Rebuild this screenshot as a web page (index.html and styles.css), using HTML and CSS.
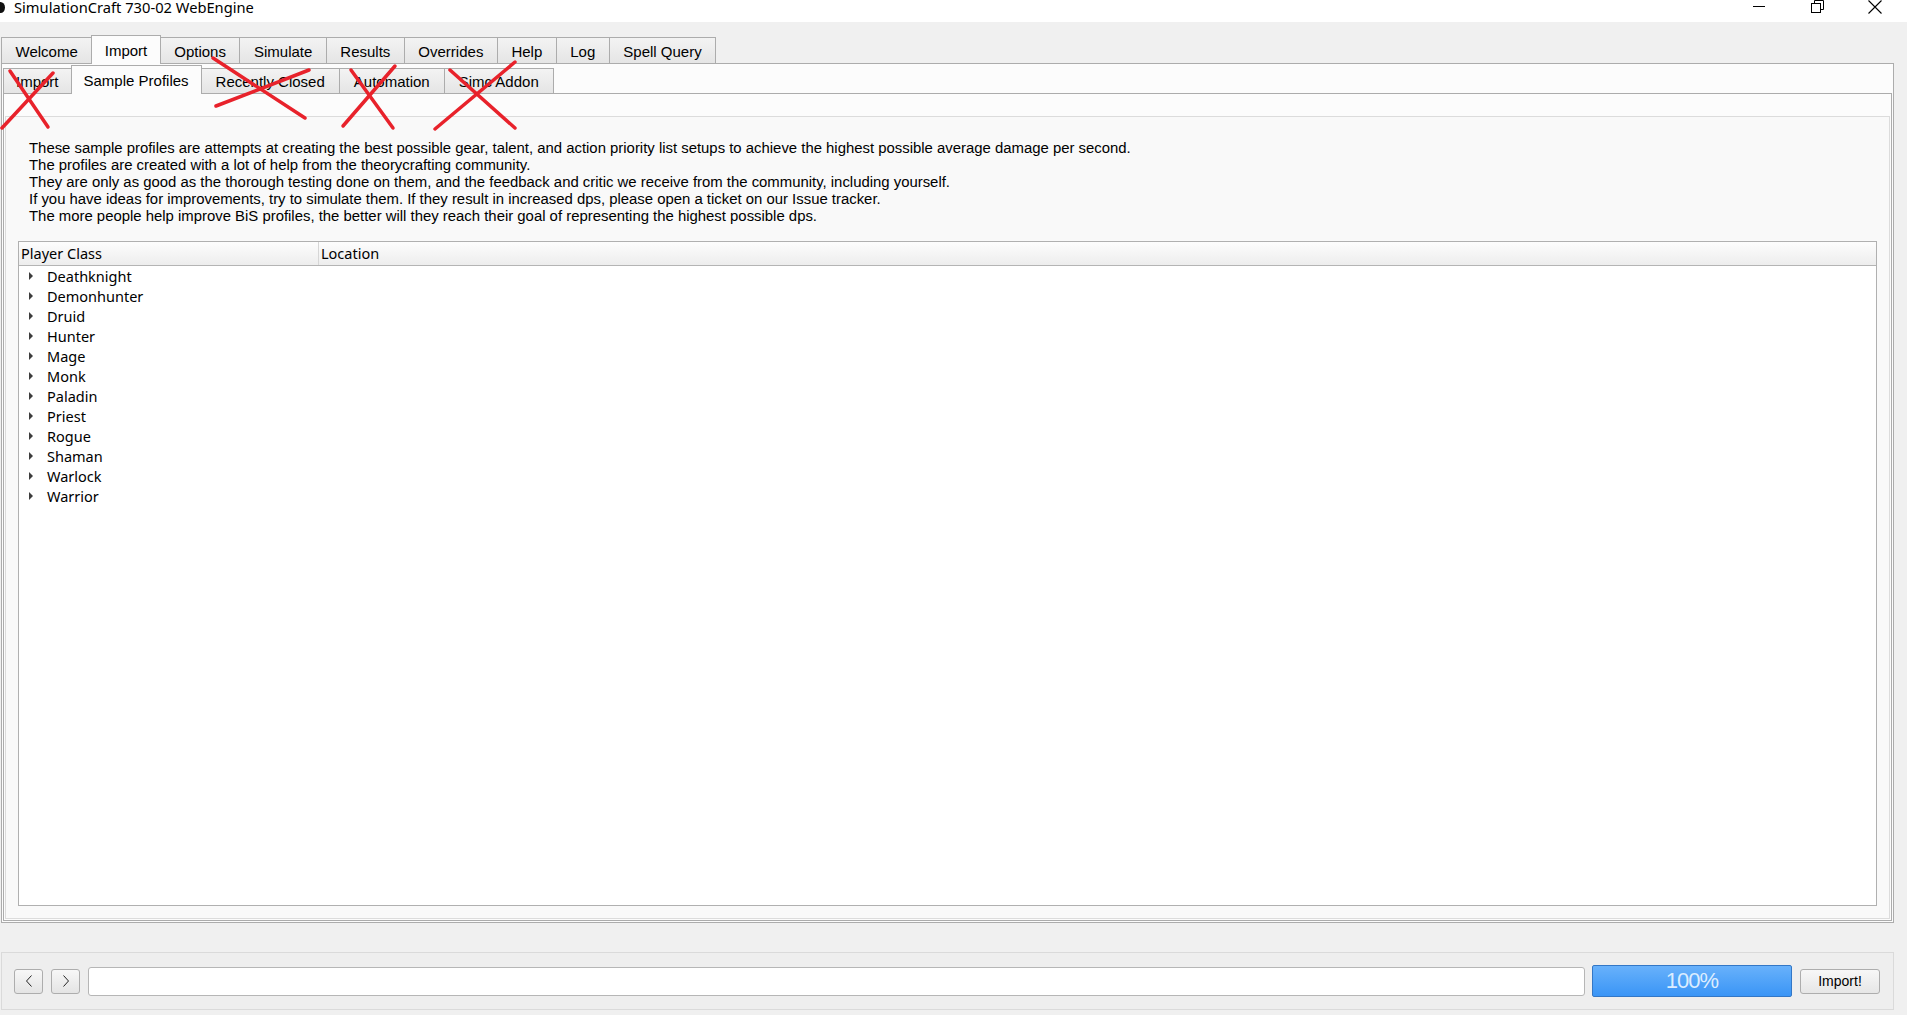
FILE: index.html
```html
<!DOCTYPE html>
<html>
<head>
<meta charset="utf-8">
<title>SimulationCraft 730-02 WebEngine</title>
<link rel="stylesheet" href="styles.css">
</head>
<body>
<div class="titlebar">
  <span class="appicon"></span>
  <span class="title">SimulationCraft 730-02 WebEngine</span>
  <div class="winctl">
    <div class="winbtn"><svg width="12" height="12" viewBox="0 0 12 12"><line x1="0" y1="6.5" x2="12" y2="6.5" stroke="#000" stroke-width="1"/></svg></div>
    <div class="winbtn"><svg width="13" height="13" viewBox="0 0 13 13"><rect x="0.5" y="3.5" width="9" height="9" fill="none" stroke="#000"/><path d="M3.5 3.5 V0.5 H12.5 V9.5 H9.5" fill="none" stroke="#000"/></svg></div>
    <div class="winbtn"><svg width="14" height="14" viewBox="0 0 14 14"><path d="M0.5 0.5 L13.5 13.5 M13.5 0.5 L0.5 13.5" stroke="#000" stroke-width="1.1"/></svg></div>
  </div>
</div>

<div class="window">
  <div class="tabbar">
    <div class="tab">Welcome</div>
    <div class="tab active">Import</div>
    <div class="tab">Options</div>
    <div class="tab">Simulate</div>
    <div class="tab">Results</div>
    <div class="tab">Overrides</div>
    <div class="tab">Help</div>
    <div class="tab">Log</div>
    <div class="tab">Spell Query</div>
  </div>
  <div class="panel-outer">
    <div class="subtabbar">
      <div class="tab sub">Import</div>
      <div class="tab sub active">Sample Profiles</div>
      <div class="tab sub">Recently Closed</div>
      <div class="tab sub">Automation</div>
      <div class="tab sub">Simc Addon</div>
    </div>
    <div class="panel-sub">
      <div class="strip"></div>
      <div class="panel-inner">
        <div class="desc">
          <div>These sample profiles are attempts at creating the best possible gear, talent, and action priority list setups to achieve the highest possible average damage per second.</div>
          <div>The profiles are created with a lot of help from the theorycrafting community.</div>
          <div>They are only as good as the thorough testing done on them, and the feedback and critic we receive from the community, including yourself.</div>
          <div>If you have ideas for improvements, try to simulate them. If they result in increased dps, please open a ticket on our Issue tracker.</div>
          <div>The more people help improve BiS profiles, the better will they reach their goal of representing the highest possible dps.</div>
        </div>
        <div class="tree">
          <div class="tree-head">
            <div class="col col1">Player Class</div>
            <div class="col col2">Location</div>
          </div>
          <div class="rows">
            <div class="row"><span class="arrow"></span>Deathknight</div>
            <div class="row"><span class="arrow"></span>Demonhunter</div>
            <div class="row"><span class="arrow"></span>Druid</div>
            <div class="row"><span class="arrow"></span>Hunter</div>
            <div class="row"><span class="arrow"></span>Mage</div>
            <div class="row"><span class="arrow"></span>Monk</div>
            <div class="row"><span class="arrow"></span>Paladin</div>
            <div class="row"><span class="arrow"></span>Priest</div>
            <div class="row"><span class="arrow"></span>Rogue</div>
            <div class="row"><span class="arrow"></span>Shaman</div>
            <div class="row"><span class="arrow"></span>Warlock</div>
            <div class="row"><span class="arrow"></span>Warrior</div>
          </div>
        </div>
      </div>
    </div>
  </div>
  <div class="bottombar">
    <div class="navbtn"><svg width="8" height="12" viewBox="0 0 8 12"><polyline points="6.5,0.5 1.5,6 6.5,11.5" fill="none" stroke="#222" stroke-width="1"/></svg></div>
    <div class="navbtn"><svg width="8" height="12" viewBox="0 0 8 12"><polyline points="1.5,0.5 6.5,6 1.5,11.5" fill="none" stroke="#222" stroke-width="1"/></svg></div>
    <div class="url"></div>
    <div class="progress">100%</div>
    <div class="importbtn">Import!</div>
  </div>
</div>

<svg class="marks" width="560" height="140" viewBox="0 0 560 140">
  <g stroke="#e8222b" stroke-width="3.5" stroke-linecap="round" fill="none">
    <line x1="10" y1="71" x2="48" y2="127"/>
    <line x1="2" y1="128" x2="53" y2="73"/>
    <line x1="213" y1="58" x2="305" y2="118"/>
    <line x1="216" y1="106" x2="309" y2="70"/>
    <line x1="351" y1="70" x2="393" y2="128"/>
    <line x1="343" y1="126" x2="395" y2="66"/>
    <line x1="450" y1="70" x2="515" y2="128"/>
    <line x1="435" y1="129" x2="515" y2="62"/>
  </g>
</svg>
</body>
</html>
```
FILE: styles.css
```css
* { box-sizing: border-box; }
html, body { margin: 0; padding: 0; }
body {
  width: 1907px;
  height: 1015px;
  overflow: hidden;
  background: #f0f0f0;
  font-family: "Liberation Sans", Arial, sans-serif;
  font-size: 15px;
  color: #000;
  position: relative;
}

/* title bar */
.titlebar {
  height: 22px;
  background: #ffffff;
  display: flex;
  align-items: flex-start;
}
.appicon {
  width: 9px;
  height: 11px;
  margin-left: -4px;
  margin-top: 2px;
  border-radius: 50%;
  background: #111;
}
.title {
  font-family: "Noto Sans", sans-serif;
  font-size: 14.7px;
  line-height: 15px;
  margin-left: 9px;
}
.winctl {
  margin-left: auto;
  margin-right: 3px;
  display: flex;
}
.winbtn {
  width: 58px;
  height: 16px;
  display: flex;
  justify-content: center;
  align-items: flex-start;
}

/* main window */
.window {
  padding: 13px 13px 0 1px;
}
.tabbar, .subtabbar {
  display: flex;
  align-items: flex-end;
  height: 28px;
  position: relative;
  z-index: 2;
}
.tab {
  height: 26px;
  padding: 0 13.5px;
  border: 1px solid #acacac;
  border-bottom: none;
  background: linear-gradient(#f3f3f3, #e5e5e5);
  line-height: 28px;
  margin-left: -1px;
  white-space: nowrap;
}
.tab:first-child { margin-left: 0; }
.tab.active {
  height: 29px;
  margin-bottom: -1px;
  background: #fcfcfc;
  line-height: 30px;
  padding: 0 12.5px;
  position: relative;
  z-index: 1;
}
.tab.sub { height: 25px; line-height: 26px; padding: 0 14px; }
.tab.sub:first-child { padding: 0 12px; }
.tab.sub.active { height: 29px; line-height: 30px; padding: 0 12px; }

.panel-outer {
  height: 860px;
  border: 1px solid #acacac;
  background: #fcfcfc;
  padding: 1px;
  display: flex;
  flex-direction: column;
}
.panel-sub {
  flex: 1;
  border: 1px solid #acacac;
  background: #fcfcfc;
  padding: 0 1px 1px 1px;
  display: flex;
  flex-direction: column;
}
.strip { height: 22px; }
.panel-inner {
  flex: 1;
  border: 1px solid #dcdcdc;
  background: #f9f9f9;
  display: flex;
  flex-direction: column;
}
.desc {
  padding: 23px 0 0 23px;
  line-height: 17px;
  white-space: nowrap;
  font-size: 14.9px;
}
.tree {
  flex: 1;
  margin: 16px 12px 12px 12px;
  border: 1px solid #b0b0b0;
  background: #ffffff;
  font-family: "Noto Sans", sans-serif;
  font-size: 14.5px;
}
.tree-head {
  display: flex;
  height: 24px;
  border-bottom: 1px solid #b4b4b4;
  background: linear-gradient(#fdfdfd, #ededed);
  line-height: 22px;
}
.col { padding-left: 2px; }
.col1 { width: 300px; border-right: 1px solid #d6d6d6; }
.col2 { flex: 1; }
.row {
  height: 20px;
  display: flex;
  align-items: center;
}
.arrow {
  width: 0;
  height: 0;
  border-left: 4px solid #3c3c3c;
  border-top: 4px solid transparent;
  border-bottom: 4px solid transparent;
  margin-left: 10px;
  margin-right: 14px;
}

/* bottom bar */
.bottombar {
  margin-top: 29px;
  height: 58px;
  border: 1px solid #dadada;
  background: #eeeeee;
  display: flex;
  align-items: center;
  padding: 0 13px 0 12px;
  gap: 8px;
}
.navbtn {
  width: 29px;
  height: 25px;
  border: 1px solid #adadad;
  border-radius: 3px;
  background: linear-gradient(#f7f7f7, #e4e4e4);
  display: flex;
  align-items: center;
  justify-content: center;
}
.url {
  flex: 1;
  height: 29px;
  border: 1px solid #b6b6b6;
  border-radius: 3px;
  background: #ffffff;
  margin-right: -1px;
}
.progress {
  width: 200px;
  height: 32px;
  border: 1px solid #3377c6;
  border-radius: 2px;
  background: linear-gradient(#68b1fb, #3a95f6);
  color: #dcedff;
  font-size: 22px;
  letter-spacing: -1px;
  line-height: 30px;
  text-align: center;
}
.importbtn {
  width: 80px;
  height: 25px;
  border: 1px solid #adadad;
  border-radius: 3px;
  background: linear-gradient(#f7f7f7, #e6e6e6);
  font-size: 14px;
  text-align: center;
  line-height: 23px;
}

/* red annotation marks drawn over the screenshot */
.marks {
  position: absolute;
  left: 0;
  top: 0;
  z-index: 10;
  pointer-events: none;
}
```
